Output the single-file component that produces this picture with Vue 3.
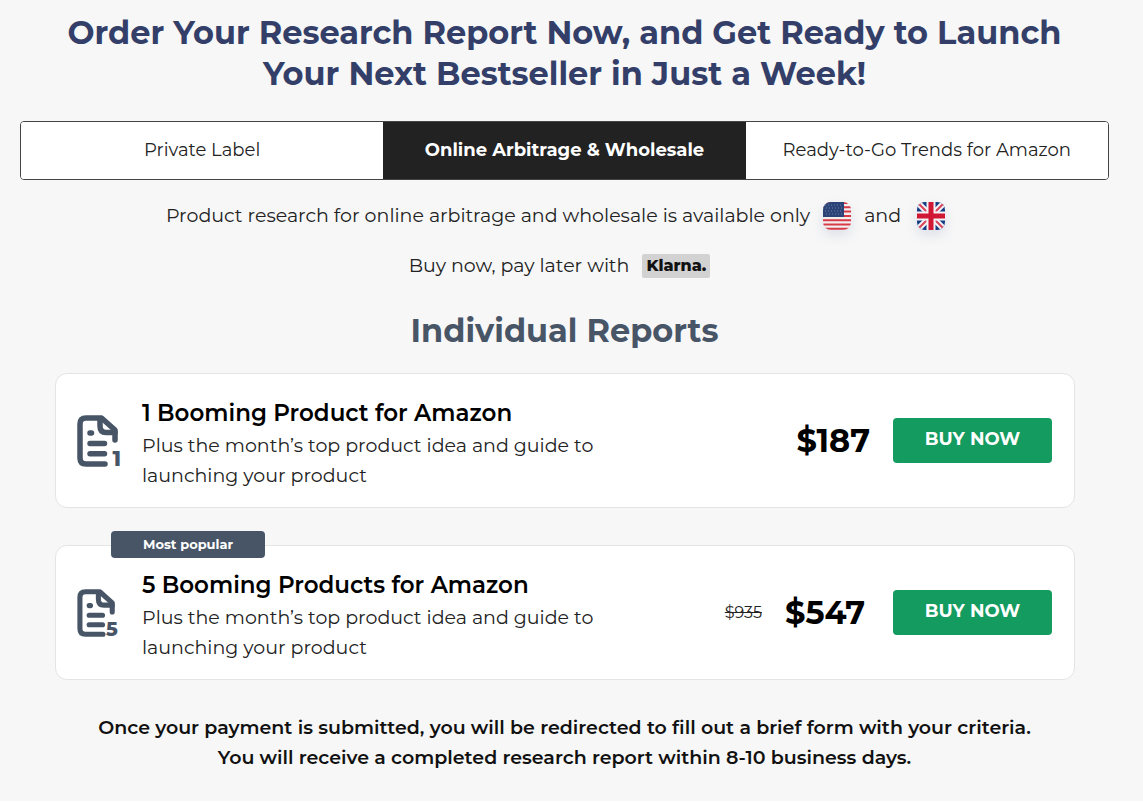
<script setup>
import { ref } from "vue"

const tabs = ["Private Label", "Online Arbitrage & Wholesale", "Ready-to-Go Trends for Amazon"]
const activeTab = ref(1)

const reports = [
  {
    count: 1,
    title: "1 Booming Product for Amazon",
    price: "$187"
  },
  {
    count: 5,
    title: "5 Booming Products for Amazon",
    price: "$547",
    oldPrice: "$935",
    badge: "Most popular"
  }
]
</script>

<template>
  <main class="pricing">
    <h1>Order Your Research Report Now, and Get Ready to Launch<br>Your Next Bestseller in Just a Week!</h1>

    <div class="tabs">
      <button
        v-for="(tab, index) in tabs"
        :key="tab"
        type="button"
        :class="{ active: activeTab === index }"
        @click="activeTab = index"
      >{{ tab }}</button>
    </div>

    <p class="note">
      <span>Product research for online arbitrage and wholesale is available only</span>
      <svg class="flag" viewBox="0 0 28 28" role="img" aria-label="United States">
        <rect width="28" height="28" fill="#f3eeee" />
        <path
          d="M0 1h28M0 5.300h28M0 9.600h28M0 13.900h28M0 18.200h28M0 22.500h28M0 26.800h28"
          stroke="#d63a47"
          stroke-width="2"
        />
        <rect width="21" height="15" fill="#2b4377" />
        <path
          d="M2 3h18M3 6h18M2 9h18M3 12h18"
          stroke="#6f80a8"
          stroke-width="1"
          stroke-dasharray="1 2"
        />
      </svg>
      <span>and</span>
      <svg class="flag uk" viewBox="0 0 28 28" role="img" aria-label="United Kingdom">
        <rect width="28" height="28" fill="#143c83" />
        <path d="M0 0L28 28M28 0L0 28" stroke="#f4f2f5" stroke-width="6" />
        <path d="M0 0L28 28M28 0L0 28" stroke="#d9435a" stroke-width="2" />
        <path d="M14 0V28M0 14H28" stroke="#f4f2f5" stroke-width="9" />
        <path d="M14 0V28M0 14H28" stroke="#d01734" stroke-width="5" />
      </svg>
    </p>

    <p class="klarna-row">
      <span>Buy now, pay later with</span>
      <span class="klarna">Klarna.</span>
    </p>

    <h2>Individual Reports</h2>

    <section class="reports">
      <article v-for="report in reports" :key="report.count" class="card">
        <span v-if="report.badge" class="badge">{{ report.badge }}</span>
        <svg class="icon" :class="{ small: report.oldPrice }" viewBox="0 0 43 52" aria-hidden="true">
          <g fill="none" stroke="#485567" stroke-width="5.500" stroke-linecap="round" stroke-linejoin="round">
            <path d="M28 49H9Q3 49 3 43V9Q3 3 9 3H24.500L38 15V25" />
            <path d="M23 4V11Q23 17.500 29 17.500H38" />
            <path d="M13 18H14.500M13 28.500H27.500M13 38.800H27.500" />
          </g>
          <text x="44" y="51" text-anchor="end">{{ report.count }}</text>
        </svg>
        <div class="info">
          <h3>{{ report.title }}</h3>
          <p>Plus the month’s top product idea and guide to launching your product</p>
        </div>
        <div class="prices" :class="{ sale: report.oldPrice }">
          <del v-if="report.oldPrice">{{ report.oldPrice }}</del>
          <strong>{{ report.price }}</strong>
        </div>
        <button type="button" class="buy">BUY NOW</button>
      </article>
    </section>

    <p class="footnote">
      Once your payment is submitted, you will be redirected to fill out a brief form with your criteria.<br>
      You will receive a completed research report within 8-10 business days.
    </p>
  </main>
</template>

<style>
body {
  margin: 0;
  background: #fff;
}
</style>

<style scoped>
.pricing {
  padding: 12px 34px 28px 20px;
  background: #f7f7f7;
  color: #222;
  font-family: Montserrat, Inter, "Open Sans", sans-serif;
  font-size: 19px;
  text-align: center;
}

h1,
h2,
h3,
p {
  margin: 0;
}

button {
  font-family: inherit;
  cursor: pointer;
}

h1 {
  color: #333f69;
  font-size: 32px;
  font-weight: 700;
  line-height: 41px;
}

.tabs {
  display: grid;
  grid-template-columns: repeat(3, 1fr);
  margin-top: 27px;
  overflow: hidden;
  border: 1px solid #444;
  border-radius: 4px;
}

.tabs button {
  padding: 0;
  border: 0;
  background: #fff;
  color: #222;
  font-size: 18px;
  line-height: 57px;
}

.tabs .active {
  background: #222;
  color: #fff;
  font-weight: 700;
}

.note,
.klarna-row {
  display: flex;
  align-items: center;
  justify-content: center;
}

.note {
  gap: 13px;
  margin-top: 19px;
  padding-right: 18px;
  line-height: 34px;
}

.flag {
  width: 28px;
  height: 28px;
  border-radius: 8px;
  box-shadow: 0 5px 12px #7080b030;
}

.uk {
  margin-left: 3px;
}

.klarna-row {
  gap: 13px;
  margin-top: 18px;
  padding-right: 10px;
  line-height: 30px;
}

.klarna {
  padding: 0 4px;
  border-radius: 2px;
  background: #d2d2d2;
  color: #111;
  font-size: 16px;
  font-weight: 800;
  line-height: 24px;
}

h2 {
  margin-top: 30px;
  color: #485567;
  font-size: 32px;
  font-weight: 700;
  line-height: 40px;
}

.reports {
  display: grid;
  gap: 37px;
  margin: 22px 34px 0 35px;
}

.card {
  position: relative;
  display: flex;
  align-items: center;
  padding: 16px 22px 16px 21px;
  border: 1px solid #e4e4e4;
  border-radius: 12px;
  background: #fff;
}

.badge {
  position: absolute;
  top: -15px;
  left: 55px;
  padding: 0 32px;
  border-radius: 4px;
  background: #485567;
  color: #fff;
  font-size: 13px;
  font-weight: 700;
  line-height: 27px;
}

.icon {
  flex: none;
  width: 43px;
  height: 52px;
  overflow: visible;
}

.icon.small {
  width: 40px;
  height: 48px;
  margin-right: 3px;
}

.icon text {
  fill: #485567;
  font-size: 21px;
  font-weight: 800;
}

.info {
  flex: 1;
  margin-left: 22px;
  padding-top: 6px;
  text-align: left;
}

h3 {
  color: #000;
  font-size: 23px;
  font-weight: 600;
  line-height: 35px;
}

.info p {
  max-width: 480px;
  line-height: 30px;
}

.prices {
  display: flex;
  align-items: center;
  gap: 23px;
  margin-right: 23px;
  color: #000;
}

.prices.sale {
  margin-right: 28px;
}

.prices strong {
  font-size: 32px;
  font-weight: 700;
}

.prices del {
  color: #222;
  font-size: 16px;
}

.buy {
  width: 159px;
  padding: 0 0 3px;
  border: 0;
  border-radius: 4px;
  background: #149b60;
  color: #fff;
  font-size: 18px;
  font-weight: 700;
  line-height: 42px;
}

.footnote {
  margin-top: 33px;
  color: #111;
  font-weight: 600;
  line-height: 30px;
}
</style>
